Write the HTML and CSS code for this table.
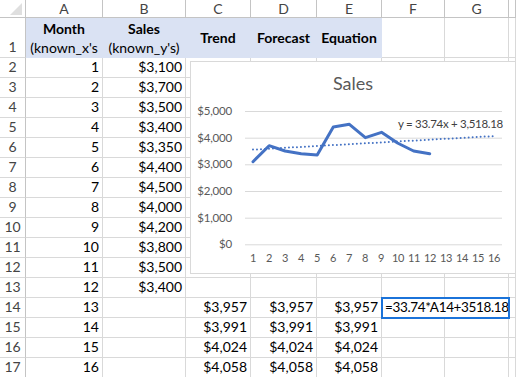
FILE: index.html
```html
<!DOCTYPE html>
<html lang="en">
<head>
    <meta charset="UTF-8">
    <title>Linear trend forecast</title>
    <link rel="stylesheet" href="styles.css">
</head>
<body>
    <div class="sheet">
        <!-- column headers -->
        <div class="c corner"><span class="tri"></span></div>
        <div class="c h">A</div><div class="c h">B</div><div class="c h">C</div><div class="c h">D</div>
        <div class="c h">E</div><div class="c h">F</div><div class="c h">G</div><div class="c h"></div>

        <!-- row 1 -->
        <div class="c r">1</div>
        <div class="c t">Month<span class="sub">(known_x's</span></div>
        <div class="c t">Sales<span class="sub">(known_y's)</span></div>
        <div class="c t">Trend</div>
        <div class="c t">Forecast</div>
        <div class="c t">Equation</div>
        <div class="c"></div><div class="c"></div><div class="c"></div>

        <div class="c r">2</div><div class="c n">1</div><div class="c n">$3,100</div><div class="c"></div><div class="c"></div><div class="c"></div><div class="c"></div><div class="c"></div><div class="c"></div>
        <div class="c r">3</div><div class="c n">2</div><div class="c n">$3,700</div><div class="c"></div><div class="c"></div><div class="c"></div><div class="c"></div><div class="c"></div><div class="c"></div>
        <div class="c r">4</div><div class="c n">3</div><div class="c n">$3,500</div><div class="c"></div><div class="c"></div><div class="c"></div><div class="c"></div><div class="c"></div><div class="c"></div>
        <div class="c r">5</div><div class="c n">4</div><div class="c n">$3,400</div><div class="c"></div><div class="c"></div><div class="c"></div><div class="c"></div><div class="c"></div><div class="c"></div>
        <div class="c r">6</div><div class="c n">5</div><div class="c n">$3,350</div><div class="c"></div><div class="c"></div><div class="c"></div><div class="c"></div><div class="c"></div><div class="c"></div>
        <div class="c r">7</div><div class="c n">6</div><div class="c n">$4,400</div><div class="c"></div><div class="c"></div><div class="c"></div><div class="c"></div><div class="c"></div><div class="c"></div>
        <div class="c r">8</div><div class="c n">7</div><div class="c n">$4,500</div><div class="c"></div><div class="c"></div><div class="c"></div><div class="c"></div><div class="c"></div><div class="c"></div>
        <div class="c r">9</div><div class="c n">8</div><div class="c n">$4,000</div><div class="c"></div><div class="c"></div><div class="c"></div><div class="c"></div><div class="c"></div><div class="c"></div>
        <div class="c r">10</div><div class="c n">9</div><div class="c n">$4,200</div><div class="c"></div><div class="c"></div><div class="c"></div><div class="c"></div><div class="c"></div><div class="c"></div>
        <div class="c r">11</div><div class="c n">10</div><div class="c n">$3,800</div><div class="c"></div><div class="c"></div><div class="c"></div><div class="c"></div><div class="c"></div><div class="c"></div>
        <div class="c r">12</div><div class="c n">11</div><div class="c n">$3,500</div><div class="c"></div><div class="c"></div><div class="c"></div><div class="c"></div><div class="c"></div><div class="c"></div>
        <div class="c r">13</div><div class="c n">12</div><div class="c n">$3,400</div><div class="c"></div><div class="c"></div><div class="c"></div><div class="c"></div><div class="c"></div><div class="c"></div>
        <div class="c r">14</div><div class="c n">13</div><div class="c"></div><div class="c n">$3,957</div><div class="c n">$3,957</div><div class="c n">$3,957</div>
        <div class="c sel">=33.74*A14+3518.18</div><div class="c"></div>
        <div class="c r">15</div><div class="c n">14</div><div class="c"></div><div class="c n">$3,991</div><div class="c n">$3,991</div><div class="c n">$3,991</div><div class="c"></div><div class="c"></div><div class="c"></div>
        <div class="c r">16</div><div class="c n">15</div><div class="c"></div><div class="c n">$4,024</div><div class="c n">$4,024</div><div class="c n">$4,024</div><div class="c"></div><div class="c"></div><div class="c"></div>
        <div class="c r">17</div><div class="c n">16</div><div class="c"></div><div class="c n">$4,058</div><div class="c n">$4,058</div><div class="c n">$4,058</div><div class="c"></div><div class="c"></div><div class="c"></div>

        <!-- floating chart object -->
        <div class="chart">
            <svg width="324" height="211" viewBox="0 0 324 211">
                <text class="title" x="162" y="28">Sales</text>
                <g class="grid">
                    <line x1="54" y1="49.5" x2="311" y2="49.5"/>
                    <line x1="54" y1="76.2" x2="311" y2="76.2"/>
                    <line x1="54" y1="102.8" x2="311" y2="102.8"/>
                    <line x1="54" y1="129.5" x2="311" y2="129.5"/>
                    <line x1="54" y1="156.2" x2="311" y2="156.2"/>
                    <line x1="54" y1="182.8" x2="311" y2="182.8"/>
                </g>
                <g class="ylab">
                    <text x="41" y="53">$5,000</text>
                    <text x="41" y="80">$4,000</text>
                    <text x="41" y="106">$3,000</text>
                    <text x="41" y="133">$2,000</text>
                    <text x="41" y="160">$1,000</text>
                    <text x="41" y="186">$0</text>
                </g>
                <g class="xlab">
                    <text x="62" y="200">1</text><text x="78" y="200">2</text><text x="94" y="200">3</text><text x="110" y="200">4</text>
                    <text x="126" y="200">5</text><text x="142" y="200">6</text><text x="158" y="200">7</text><text x="174" y="200">8</text>
                    <text x="190" y="200">9</text><text x="207" y="200">10</text><text x="223" y="200">11</text><text x="239" y="200">12</text>
                    <text x="255" y="200">13</text><text x="271" y="200">14</text><text x="287" y="200">15</text><text x="303" y="200">16</text>
                </g>
                <polyline class="sales" points="62,99.7 78.1,83.7 94.1,89 110.2,91.7 126.2,93 142.3,65 158.4,62.3 174.4,75.7 190.5,70.3 206.5,81 222.6,89 238.7,91.7"/>
                <line class="trend" x1="62" y1="87.6" x2="302.9" y2="74.1"/>
                <text class="eq" x="312" y="66">y = 33.74x + 3,518.18</text>
            </svg>
        </div>
    </div>
</body>
</html>
```

FILE: styles.css
```css
body { margin: 0; background: #fff; overflow: hidden; font-family: Lato, "Open Sans", sans-serif; }

.sheet {
    position: relative;
    display: grid;
    grid-template-columns: 26px 77px 83px 65px 66px 65px 63px 64px 7px;
    grid-template-rows: 18px 40px repeat(16, 20px);
    width: 516px;
    font-size: 14px;
    color: #000;
}

.c {
    display: flex;
    align-items: flex-end;
    padding: 0 3px 1px;
    border-right: 1px solid #d9d9d9;
    border-bottom: 1px solid #d9d9d9;
    white-space: nowrap;
    overflow: hidden;
    line-height: 18px;
}

.corner, .h { background: #fff; border-color: #c4c4c4; }
.h { justify-content: center; align-items: center; color: #444; padding: 0; }
.corner { justify-content: flex-end; padding: 0 3px 2px 0; }
.tri {
    width: 0; height: 0;
    border-left: 12px solid transparent;
    border-bottom: 12px solid #dfdfdf;
}

.r { justify-content: center; color: #444; padding: 0 0 1px; border-right-color: #c4c4c4; }

.n { justify-content: flex-end; }

.t {
    flex-direction: column;
    justify-content: center;
    align-items: center;
    background: #dae2f3;
    border-color: #dae2f3;
    font-weight: bold;
    line-height: 19px;
    padding: 0;
}
.t .sub { font-weight: normal; }

.sel {
    grid-column: span 2;
    padding: 0 2px 1px 3px;
    font-size: 13.5px;
    letter-spacing: -0.35px;
    outline: 2px solid #1b73d9;
    outline-offset: -1px;
    position: relative;
    z-index: 1;
}

.chart {
    position: absolute;
    left: 190px;
    top: 61px;
    width: 324px;
    height: 211px;
    background: #fff;
    border: 1px solid #d9d9d9;
}
.chart svg { display: block; font-family: Lato, "Open Sans", sans-serif; }
.chart .title { font-size: 18px; fill: #595959; text-anchor: middle; }
.chart .grid line { stroke: #d9d9d9; stroke-width: 1; }
.chart .ylab text { font-size: 11.5px; letter-spacing: -0.2px; fill: #595959; text-anchor: end; }
.chart .xlab text { font-size: 11px; letter-spacing: -0.5px; fill: #595959; text-anchor: middle; }
.chart .eq { font-size: 11.5px; letter-spacing: -0.3px; fill: #404040; text-anchor: end; }
.chart .sales { fill: none; stroke: #4472c4; stroke-width: 3; stroke-linejoin: round; stroke-linecap: round; }
.chart .trend { stroke: #4472c4; stroke-width: 2; stroke-dasharray: 0 4; stroke-linecap: round; }
```
